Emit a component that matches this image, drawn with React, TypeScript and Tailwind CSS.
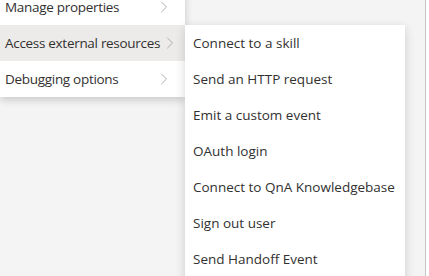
import { ChevronRight } from 'lucide-react';

const mainItems = [
  { label: 'Manage properties', active: false },
  { label: 'Access external resources', active: true },
  { label: 'Debugging options', active: false },
];

const subItems = [
  'Connect to a skill',
  'Send an HTTP request',
  'Emit a custom event',
  'OAuth login',
  'Connect to QnA Knowledgebase',
  'Sign out user',
  'Send Handoff Event',
];

export default function App() {
  return (
    <div className="relative h-[276px] w-[429px] overflow-hidden bg-white font-['Open_Sans',sans-serif] text-[13.5px] text-[#323130]">
      <div className="flex h-full">
        <div className="flex-1 bg-[#f4f4f4]" />
        <div className="w-px bg-[#c8c6c4]" />
        <div className="w-[3px] bg-white" />
      </div>

      <div className="absolute left-0 top-[-11px] w-[185px] bg-white shadow-[0_3px_8px_rgba(0,0,0,0.18)]">
        {mainItems.map((item) => (
          <div
            key={item.label}
            className={`flex h-9 items-center whitespace-nowrap pl-[5px] ${item.active ? 'bg-[#edebe9]' : ''}`}
          >
            <span className="tracking-[-0.3px]">{item.label}</span>
            <ChevronRight className="ml-auto mr-[11px] h-5 w-5 shrink-0 text-[#a19f9d]" strokeWidth={1} />
          </div>
        ))}
      </div>

      <div className="absolute left-[185px] top-[25px] h-[270px] w-[220px] bg-white shadow-[0_3px_10px_rgba(0,0,0,0.16)]">
        {subItems.map((label) => (
          <div key={label} className="flex h-9 items-center whitespace-nowrap px-2">
            {label}
          </div>
        ))}
      </div>
    </div>
  );
}
